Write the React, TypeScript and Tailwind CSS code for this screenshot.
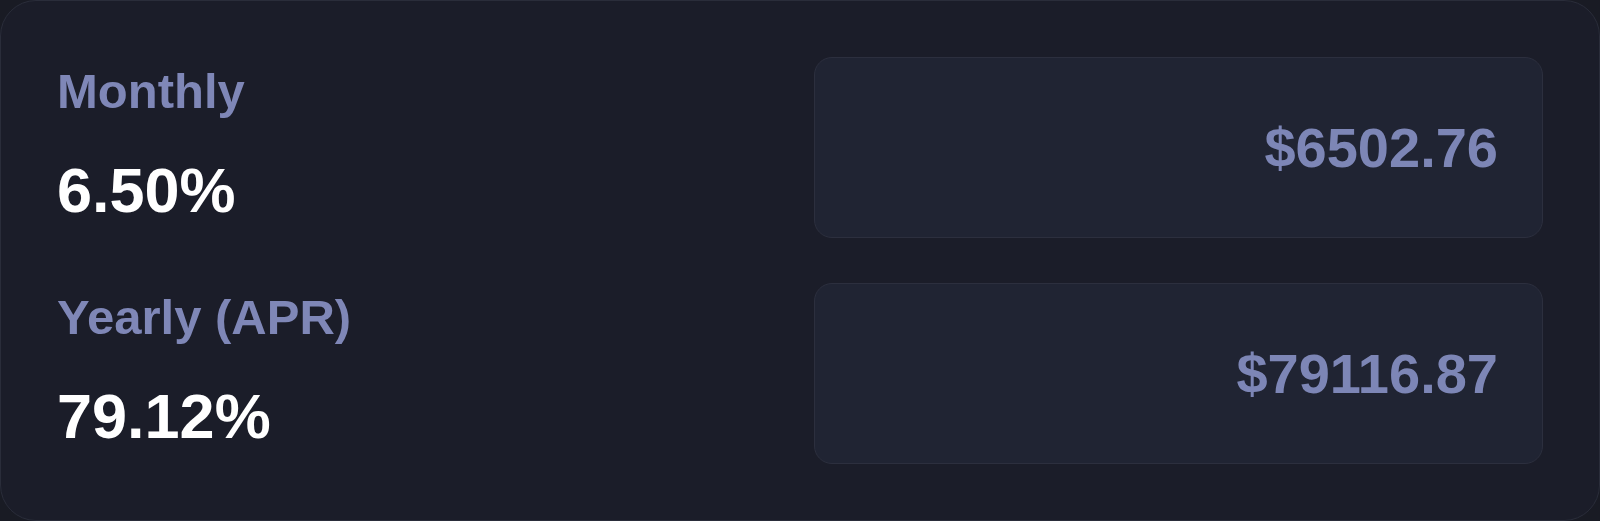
import React from "react";

const rows = [
  { label: "Monthly", rate: "6.50%", amount: "$6502.76" },
  { label: "Yearly (APR)", rate: "79.12%", amount: "$79116.87" },
];

const App = () => {
  return (
    <div className="w-[1600px] h-[521px] bg-[#191b24] font-['Liberation_Sans',Arial,sans-serif]">
      <div className="h-full rounded-[36px] border border-[#2a2d3a] bg-[#1b1d29] p-[56px]">
        <div className="grid grid-cols-2 gap-x-[28px] gap-y-[45px]">
          {rows.map((row) => (
            <React.Fragment key={row.label}>
              <div className="flex flex-col pt-[10px]">
                <div className="text-[49px] leading-[48px] font-bold text-[#7f87b7]">{row.label}</div>
                <div className="mt-[44px] text-[63px] leading-[62px] font-bold text-white">{row.rate}</div>
              </div>
              <div className="h-[181px] rounded-[18px] border border-[#2c2f3e] bg-[#202433] flex items-center justify-end pr-[44px]">
                <span className="text-[56px] leading-[56px] font-bold text-[#7d86b6]">{row.amount}</span>
              </div>
            </React.Fragment>
          ))}
        </div>
      </div>
    </div>
  );
};

export default App;
